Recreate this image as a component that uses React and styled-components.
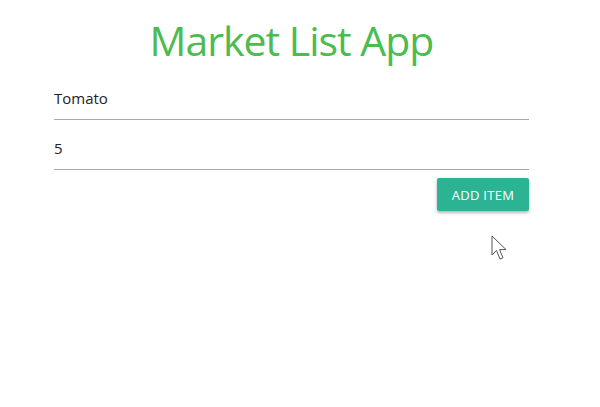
import React from "react";
import styled, { createGlobalStyle } from "styled-components";

const GlobalStyle = createGlobalStyle`
  html, body {
    margin: 0;
    padding: 0;
    background: #ffffff;
    font-family: "Open Sans", "Noto Sans", sans-serif;
  }
`;

const App = () => {
  return (
    <Page>
      <GlobalStyle />
      <Title>Market List App</Title>
      <ItemForm>
        <Field defaultValue="Tomato" />
        <Field defaultValue="5" />
        <Actions>
          <AddButton type="button">Add Item</AddButton>
        </Actions>
      </ItemForm>
      <Cursor width="19" height="27" viewBox="0 0 19 27">
        <path
          d="M1 1 L1 20 L5.5 15.5 L9 24 L12 22.8 L8.6 14.6 L15 14.6 Z"
          fill="#ffffff"
          stroke="#555"
          strokeWidth="1"
          strokeLinejoin="round"
        />
      </Cursor>
    </Page>
  );
};

const Page = styled.div`
  position: relative;
  width: 600px;
  height: 407px;
  padding: 0 71px 0 54px;
  box-sizing: border-box;
  overflow: hidden;
`;

const Title = styled.h1`
  margin: 0;
  padding-top: 18px;
  height: 70px;
  box-sizing: border-box;
  text-align: center;
  font-weight: 400;
  font-size: 41px;
  letter-spacing: -1px;
  line-height: 1.1;
  color: #4cbb50;
`;

const ItemForm = styled.form`
  display: flex;
  flex-direction: column;
`;

const Field = styled.input`
  height: 50px;
  padding: 7px 0 0;
  box-sizing: border-box;
  border: none;
  border-bottom: 1px solid #a8a8a8;
  outline: none;
  font-family: "Open Sans", "Noto Sans", sans-serif;
  font-size: 15px;
  color: #222;
  background: transparent;
`;

const Actions = styled.div`
  display: flex;
  justify-content: flex-end;
  padding-top: 8px;
`;

const AddButton = styled.button`
  width: 92px;
  height: 33px;
  border: none;
  border-radius: 2px;
  background: #2bb393;
  color: #ffffff;
  font-family: "Open Sans", "Noto Sans", sans-serif;
  font-size: 13px;
  letter-spacing: 0.3px;
  text-transform: uppercase;
  box-shadow: 0 2px 3px rgba(0, 0, 0, 0.22), 0 1px 5px rgba(0, 0, 0, 0.1);
  cursor: pointer;
`;

const Cursor = styled.svg`
  position: absolute;
  left: 491px;
  top: 235px;
`;

export default App;
